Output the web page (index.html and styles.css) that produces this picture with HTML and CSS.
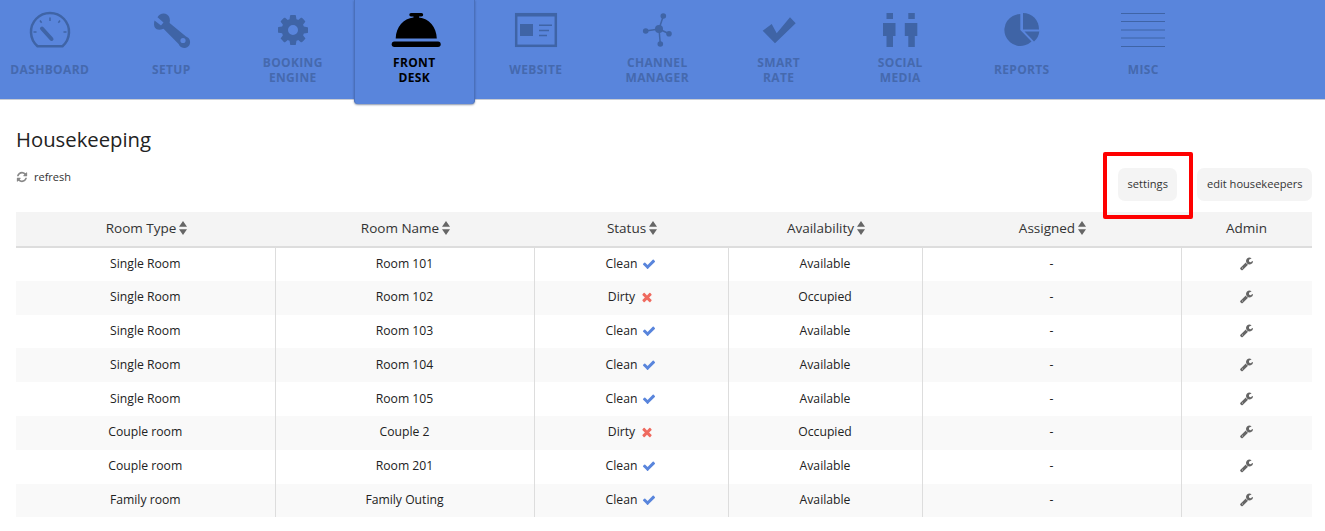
FILE: index.html
```html
<!DOCTYPE html>
<html lang="en">
<head>
<meta charset="utf-8">
<title>Housekeeping</title>
<link rel="stylesheet" href="styles.css">
</head>
<body>
<svg class="defs" width="0" height="0" aria-hidden="true">
  <symbol id="wrench" viewBox="0 0 1664 1792"><path d="M384 1408q0-26-19-45t-45-19-45 19-19 45 19 45 45 19 45-19 19-45zm644-420l-682 682q-37 37-90 37-52 0-91-37l-106-108q-38-36-38-90 0-53 38-91l681-681q39 98 114.5 173.5t173.5 114.5zm634-435q0 39-23 106-47 134-164.5 217.5t-258.5 83.5q-185 0-316.5-131.5t-131.5-316.5 131.5-316.5 316.5-131.5q58 0 121.5 16.5t107.5 46.5q16 11 16 28t-16 28l-293 169v224l193 111q5-3 79-48.5t135.5-81 70.5-35.5q15 0 23.5 10t8.5 25z"/></symbol>
  <symbol id="check" viewBox="0 0 1792 1792"><path d="M1671 566q0 40-28 68l-724 724-136 136q-28 28-68 28t-68-28l-136-136-362-362q-28-28-28-68t28-68l136-136q28-28 68-28t68 28l294 295 656-657q28-28 68-28t68 28l136 136q28 28 28 68z"/></symbol>
  <symbol id="times" viewBox="0 0 1792 1792"><path d="M1490 1322q0 40-28 68l-136 136q-28 28-68 28t-68-28l-294-294-294 294q-28 28-68 28t-68-28l-136-136q-28-28-28-68t28-68l294-294-294-294q-28-28-28-68t28-68l136-136q28-28 68-28t68 28l294 294 294-294q28-28 68-28t68 28l136 136q28 28 28 68t-28 68l-294 294 294 294q28 28 28 68z"/></symbol>
  <symbol id="sort" viewBox="0 0 8 14"><path d="M4 0 8 5.8H0zM4 14 0 8.2H8z"/></symbol>
</svg>

<nav class="topnav">
  <a class="navitem">
    <svg class="navicon" viewBox="0 0 60 34"><path class="line" d="M17.5 33.2A19 19 0 1 1 42.5 33.2Z"/><path class="thin" d="M30 4.5V8M20 7.5l1.6 2.2M40 7.5l-1.6 2.2M13.5 19h3M43.5 19h3"/><path class="needle" d="M22 15.5 31.5 26"/></svg>
    <span class="navlabel">DASHBOARD</span>
  </a>
  <a class="navitem">
    <svg class="navicon" viewBox="0 0 60 34"><path d="M13.5 7.5 20 12.5l2.5-3-6-5.2C18 .8 23 -.6 26 1.500 28.500 3.300 29.500 6.500 28.600 10L45 23.500a5.900 5.900 0 1 1-7.400 7.500L22.500 15.700C18.500 17.500 15.500 16.800 14 14.800 12.800 13 12.800 10 13.500 7.500Z"/><circle class="hole" cx="42" cy="27.500" r="2.600"/></svg>
    <span class="navlabel">SETUP</span>
  </a>
  <a class="navitem">
    <svg class="navicon" viewBox="0 0 60 34"><svg x="12.500" y="-0.500" width="35" height="35" viewBox="0 0 1792 1792"><path d="M1152 896q0-106-75-181t-181-75-181 75-75 181 75 181 181 75 181-75 75-181zm512-109v222q0 12-8 23t-20 13l-185 28q-19 54-39 91 35 50 107 138 10 12 10 25t-9 23q-27 37-99 108t-94 71q-12 0-26-9l-138-108q-44 23-91 38-16 136-29 186-7 28-36 28h-222q-14 0-24.500-8.500t-11.500-21.500l-28-184q-49-16-90-37l-141 107q-10 9-25 9-14 0-25-11-126-114-165-168-7-10-7-23 0-12 8-23 15-21 51-66.500t54-70.500q-27-50-41-99l-183-27q-13-2-21-12.500t-8-23.500v-222q0-12 8-23t19-13l186-28q14-46 39-92-40-57-107-138-10-12-10-24 0-10 9-23 26-36 98.500-107.500t94.500-71.500q13 0 26 10l138 107q44-23 91-38 16-136 29-186 7-28 36-28h222q14 0 24.500 8.500t11.500 21.500l28 184q49 16 90 37l142-107q9-9 24-9 13 0 25 10 129 119 165 170 7 8 7 22 0 12-8 23-15 21-51 66.500t-54 70.500q26 50 41 98l183 28q13 2 21 12.500t8 23.500z"/></svg></svg>
    <span class="navlabel">BOOKING<br>ENGINE</span>
  </a>
  <a class="navitem active">
    <svg class="navicon" viewBox="0 0 60 34"><path d="M27 0h10.500a1.500 1.500 0 0 1 0 3.400H35v1.100C45 5.500 52.500 14 52.800 25.500H11.700C12 14 19.500 5.500 29.500 4.500V3.400H27A1.500 1.500 0 0 1 27 0Z"/><rect x="7.700" y="28.500" width="49" height="5.500" rx="2.700"/></svg>
    <span class="navlabel">FRONT<br>DESK</span>
  </a>
  <a class="navitem">
    <svg class="navicon" viewBox="0 0 60 34"><rect class="line" x="10.200" y="1.200" width="39.600" height="31.600"/><rect x="9" y="0" width="42" height="3.500"/><rect x="14" y="11" width="13" height="12"/><path class="thin" d="M33 12.200H46M33 17.500H43M33 22.500H41"/></svg>
    <span class="navlabel">WEBSITE</span>
  </a>
  <a class="navitem">
    <svg class="navicon" viewBox="0 0 60 34"><path class="thin" d="M32 16 36.300 3M32 16 18.700 18M32 16 42 20.700M32 16 33.300 31"/><circle cx="32" cy="16" r="4"/><circle cx="36.300" cy="3" r="2.800"/><circle cx="18.700" cy="18" r="2.800"/><circle cx="42" cy="20.700" r="2.800"/><circle cx="33.300" cy="31" r="2.800"/></svg>
    <span class="navlabel">CHANNEL<br>MANAGER</span>
  </a>
  <a class="navitem">
    <svg class="navicon" viewBox="0 0 60 34"><path d="M13.700 17.700 22.700 11 27.700 20.300 41 4.300 46.700 10.300 26 30.300Z"/></svg>
    <span class="navlabel">SMART<br>RATE</span>
  </a>
  <a class="navitem">
    <svg class="navicon" viewBox="0 0 60 34"><path d="M16.500 0H23V6H16.500ZM13 10H25.500V23H23V34H16.500V23H13ZM38.300 0H44.800V6H38.300ZM34.800 10H47.300V23H44.800V34H38.300V23H34.800Z"/></svg>
    <span class="navlabel">SOCIAL<br>MEDIA</span>
  </a>
  <a class="navitem">
    <svg class="navicon" viewBox="0 0 60 34"><path d="M28.300 1V17L39.500 28.500A16 16 0 1 1 28.300 1Z"/><path d="M31 0V16.500H47A16 16 0 0 0 31 0Z"/><path d="M32.500 18.500H47.300A15 15 0 0 1 42 28.500Z"/></svg>
    <span class="navlabel">REPORTS</span>
  </a>
  <a class="navitem">
    <svg class="navicon" viewBox="0 0 60 34"><path class="hair" d="M8 .5H52M8 8.500H52M8 17H52M8 25H52M8 33.500H52"/></svg>
    <span class="navlabel">MISC</span>
  </a>
</nav>

<main class="page">
  <h1 class="title">Housekeeping</h1>
  <div class="toolbar">
    <a class="refresh"><svg class="refresh-icon" viewBox="0 0 1792 1792"><path d="M1639 1056q0 5-1 7-64 268-268 434.500t-478 166.500q-146 0-282.500-55t-243.500-157l-129 129q-19 19-45 19t-45-19-19-45v-448q0-26 19-45t45-19h448q26 0 45 19t19 45-19 45l-137 137q71 66 161 102t187 36q134 0 250-65t186-179q11-17 53-117 8-23 30-23h192q13 0 22.500 9.500t9.500 22.500zm25-800v448q0 26-19 45t-45 19h-448q-26 0-45-19t-19-45 19-45l138-138q-148-137-349-137-134 0-250 65t-186 179q-11 17-53 117-8 23-30 23h-199q-13 0-22.500-9.500t-9.500-22.500v-7q65-268 270-434.500t480-166.500q146 0 284 55.500t245 156.500l130-129q19-19 45-19t45 19 19 45z"/></svg>refresh</a>
    <div class="actions">
      <a class="btn btn-marked">settings<span class="marker"></span></a>
      <a class="btn">edit housekeepers</a>
    </div>
  </div>
  <table class="grid">
    <colgroup><col class="c1"><col class="c2"><col class="c3"><col class="c4"><col class="c5"><col class="c6"></colgroup>
    <thead>
      <tr>
        <th class="sortable">Room Type<svg class="sort"><use href="#sort"/></svg></th>
        <th class="sortable">Room Name<svg class="sort"><use href="#sort"/></svg></th>
        <th class="sortable">Status<svg class="sort"><use href="#sort"/></svg></th>
        <th class="sortable">Availability<svg class="sort"><use href="#sort"/></svg></th>
        <th class="sortable">Assigned<svg class="sort"><use href="#sort"/></svg></th>
        <th>Admin</th>
      </tr>
    </thead>
    <tbody>
      <tr><td>Single Room</td><td>Room 101</td><td>Clean<svg class="st ok"><use href="#check"/></svg></td><td>Available</td><td>-</td><td><svg class="wr"><use href="#wrench"/></svg></td></tr>
      <tr><td>Single Room</td><td>Room 102</td><td>Dirty<svg class="st bad"><use href="#times"/></svg></td><td>Occupied</td><td>-</td><td><svg class="wr"><use href="#wrench"/></svg></td></tr>
      <tr><td>Single Room</td><td>Room 103</td><td>Clean<svg class="st ok"><use href="#check"/></svg></td><td>Available</td><td>-</td><td><svg class="wr"><use href="#wrench"/></svg></td></tr>
      <tr><td>Single Room</td><td>Room 104</td><td>Clean<svg class="st ok"><use href="#check"/></svg></td><td>Available</td><td>-</td><td><svg class="wr"><use href="#wrench"/></svg></td></tr>
      <tr><td>Single Room</td><td>Room 105</td><td>Clean<svg class="st ok"><use href="#check"/></svg></td><td>Available</td><td>-</td><td><svg class="wr"><use href="#wrench"/></svg></td></tr>
      <tr><td>Couple room</td><td>Couple 2</td><td>Dirty<svg class="st bad"><use href="#times"/></svg></td><td>Occupied</td><td>-</td><td><svg class="wr"><use href="#wrench"/></svg></td></tr>
      <tr><td>Couple room</td><td>Room 201</td><td>Clean<svg class="st ok"><use href="#check"/></svg></td><td>Available</td><td>-</td><td><svg class="wr"><use href="#wrench"/></svg></td></tr>
      <tr><td>Family room</td><td>Family Outing</td><td>Clean<svg class="st ok"><use href="#check"/></svg></td><td>Available</td><td>-</td><td><svg class="wr"><use href="#wrench"/></svg></td></tr>
    </tbody>
  </table>
</main>
</body>
</html>
```
FILE: styles.css
```css
* { box-sizing: border-box; }
html, body { margin: 0; height: 100%; overflow: hidden; background: #fff; }
body { font-family: "Open Sans", "Liberation Sans", sans-serif; font-size: 12px; color: #333; }
.defs { display: block; height: 0; }

.topnav {
  display: flex;
  align-items: flex-start;
  height: 100px;
  padding-left: 0;
  background: #5985dc;
  border-bottom: 1px solid #c9ccd3;
  overflow: visible;
}
.navitem {
  flex: 0 0 121.5px;
  height: 99px;
  padding-top: 13px;
  display: flex;
  flex-direction: column;
  align-items: center;
  color: #4569ae;
  fill: #3f64a6;
  stroke: none;
}
.navitem:first-child { margin-left: -11px; }
.navitem.active {
  height: 104px;
  background: #5985dc;
  color: #000;
  fill: #000;
  border-left: 1px solid #4a70bb;
  border-right: 1px solid #4a70bb;
  border-radius: 0 0 4px 4px;
  box-shadow: 0 1px 2px rgba(40, 60, 100, .55);
  position: relative;
}
.navicon { width: 60px; height: 34px; display: block; flex: none; overflow: visible; }
.navicon .line { fill: none; stroke: #3f64a6; stroke-width: 2.5; }
.navicon .thin { fill: none; stroke: #3f64a6; stroke-width: 1.5; }
.navicon .hair { fill: none; stroke: #3f64a6; stroke-width: 1; }
.navicon .needle { fill: none; stroke: #3f64a6; stroke-width: 4; stroke-linecap: round; }
.navicon .hole { fill: #5985dc; }
.navlabel {
  margin-top: 7px;
  height: 30px;
  display: flex;
  align-items: center;
  justify-content: center;
  text-align: center;
  font-size: 12px;
  font-weight: 700;
  line-height: 15px;
  letter-spacing: .35px;
  padding-top: 1px;
}

.page { padding: 0 13px 0 16px; }
.title {
  margin: 25px 0 0;
  font-size: 20.300px;
  font-weight: 400;
  line-height: 28px;
  color: #222;
}
.toolbar {
  display: flex;
  justify-content: space-between;
  align-items: flex-start;
  height: 59px;
}
.refresh {
  margin-top: 15px;
  display: flex;
  align-items: center;
  font-size: 11px;
  line-height: 18px;
}
.refresh-icon { width: 12px; height: 12px; fill: #888; margin-right: 6px; }
.actions { display: flex; gap: 20px; margin-top: 15px; }
.btn {
  position: relative;
  display: block;
  height: 33px;
  padding: 0 9.500px;
  line-height: 32px;
  font-size: 11.100px;
  background: #f4f4f4;
  border-radius: 7px;
}
.marker {
  position: absolute;
  left: -15px;
  top: -16px;
  width: 90px;
  height: 67px;
  border: 4px solid #fe0000;
  border-radius: 2px;
  pointer-events: none;
}

.grid {
  width: 1296px;
  table-layout: fixed;
  border-collapse: collapse;
  text-align: center;
}
.c1, .c2, .c5 { width: 259px; }
.c3, .c4 { width: 194px; }
.c6 { width: 131px; }
.grid th {
  height: 35px;
  padding: 0 0 2px;
  font-size: 13.500px;
  font-weight: 400;
  background: #f4f4f4;
  border-bottom: 2px solid #ddd;
  color: #333;
}
.grid th.sortable { padding-left: 2px; }
.grid td {
  height: 33.800px;
  padding: 0 0 2px;
  font-size: 12.200px;
  color: #222;
  border-left: 1px solid #ddd;
}
.grid td:first-child { border-left: 0; }
.grid tbody tr:nth-child(even) { background: #f9f9f9; }
.sort { width: 8px; height: 14px; margin-left: 3px; fill: #666; vertical-align: -2px; }
.st { width: 14px; height: 14px; margin-left: 5px; vertical-align: -3px; }
.ok { fill: #5985dc; }
.bad { fill: #ef6a5f; }
.wr { width: 13px; height: 14px; fill: #666; vertical-align: -3px; }
```
